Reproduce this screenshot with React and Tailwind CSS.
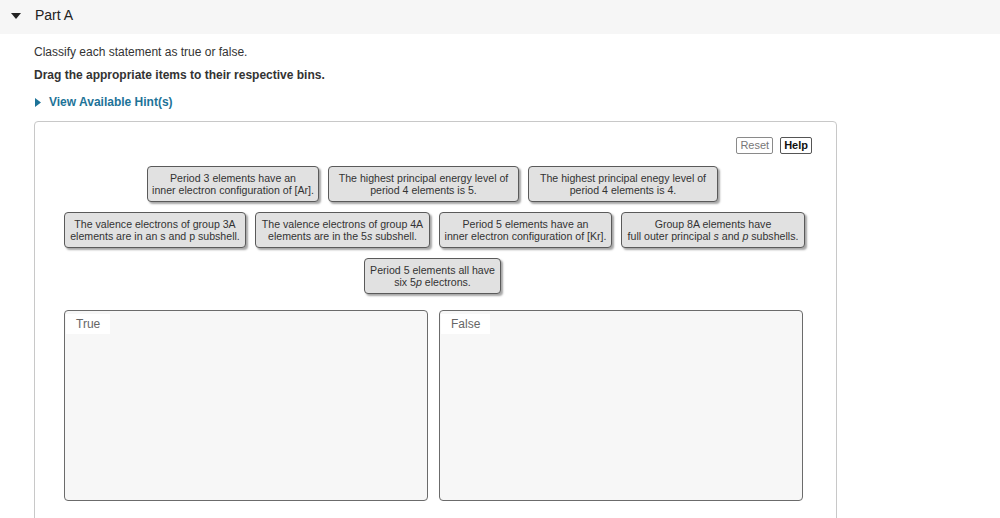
const rows = [
  [
    [172, "Period 3 elements have an", "inner electron configuration of [Ar]."],
    [191, "The highest principal energy level of", "period 4 elements is 5."],
    [190, "The highest principal enegy level of", "period 4 elements is 4."],
  ],
  [
    [182, "The valence electrons of group 3A", "elements are in an s and p subshell."],
    [175, "The valence electrons of group 4A", <>elements are in the 5<i>s</i> subshell.</>],
    [173, "Period 5 elements have an", "inner electron configuration of [Kr]."],
    [184, "Group 8A elements have", <>full outer principal <i>s</i> and <i>p</i> subshells.</>],
  ],
  [[137, "Period 5 elements all have", <>six 5<i>p</i> electrons.</>]],
];

function Item({ width, top, bottom }) {
  return (
    <div
      style={{ width }}
      className="bg-[#e1e1e1] border border-[#5a5a5a] rounded-[4px] shadow-[2px_2px_2px_rgba(0,0,0,0.35)] py-[5px] text-center text-[10.6px] leading-[12px] text-[#333] whitespace-nowrap"
    >
      <div>{top}</div>
      <div>{bottom}</div>
    </div>
  );
}

function Bin({ label }) {
  return (
    <div className="flex-1 h-[191px] bg-[#f7f7f7] border border-[#6b6b6b] rounded-[4px]">
      <div className="inline-block bg-white ml-[1px] mt-[1px] px-[10px] pt-[1px] h-[20px] text-[12px] text-[#666]">{label}</div>
    </div>
  );
}

export default function App() {
  return (
    <div className="w-[1000px] h-[518px] overflow-hidden bg-white font-['Liberation_Sans',Arial,sans-serif] text-[#333]">
      {/* Part header */}
      <div className="h-[34px] bg-[#f6f6f6] flex items-center">
        <svg width="10" height="6" viewBox="0 0 10 6" className="ml-[11px] mt-[-2px]">
          <path d="M0 0 L10 0 L5 6 Z" fill="#222" />
        </svg>
        <span className="ml-[14px] text-[14px] text-[#222] mt-[-4px]">Part A</span>
      </div>

      <div className="pl-[34px]">
        <p className="mt-[11px] text-[12px] leading-[14px]">Classify each statement as true or false.</p>
        <p className="mt-[9px] text-[12px] leading-[14px] font-bold">Drag the appropriate items to their respective bins.</p>
        <div className="mt-[13px] flex items-center text-[12px] leading-[14px] font-bold text-[#1d7398]">
          <svg width="6" height="9" viewBox="0 0 6 9" className="ml-[1px]">
            <path d="M0 0 L6 4.5 L0 9 Z" fill="#1d7398" />
          </svg>
          <span className="ml-[8px]">View Available Hint(s)</span>
        </div>

        {/* Drag-and-drop area */}
        <div className="mt-[12px] w-[803px] h-[420px] border border-[#c8c8c8] rounded-[4px] pt-[15px] px-[29px]">
          <div className="flex justify-end gap-[7px] mr-[-5px]">
            <button className="border border-[#8a8a8a] rounded-[2px] px-[3px] h-[17px] text-[11px] leading-[15px] text-[#777]">Reset</button>
            <button className="border border-[#555] rounded-[2px] px-[3px] h-[17px] text-[11px] leading-[15px] font-bold text-[#111]">Help</button>
          </div>
          <div className="mt-[12px] flex flex-col gap-[10px]">
            {rows.map((row, i) => (
              <div key={i} className={"flex justify-center gap-[9px] " + (i === 1 ? "pr-[2px]" : "pr-[6px]")}>
                {row.map(([width, top, bottom], j) => (
                  <Item key={j} width={width} top={top} bottom={bottom} />
                ))}
              </div>
            ))}
          </div>
          <div className="mt-[16px] flex gap-[11px] pr-[4px]">
            <Bin label="True" />
            <Bin label="False" />
          </div>
        </div>
      </div>
    </div>
  );
}
